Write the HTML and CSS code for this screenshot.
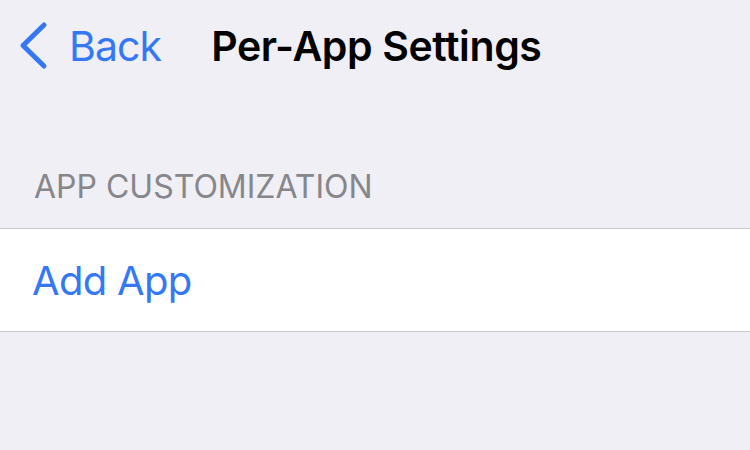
FILE: index.html
```html
<!DOCTYPE html>
<html lang="en">
<head>
  <meta charset="UTF-8" />
  <title>Per-App Settings</title>
  <link rel="stylesheet" href="styles.css">
</head>
<body>
  <header class="navbar">
    <a class="back" href="#">
      <svg class="chevron" width="30" height="50" viewBox="0 0 30 50">
        <path d="M26 4 L5 24.5 L26 45" fill="none" stroke="currentColor" stroke-width="5" stroke-linecap="round" stroke-linejoin="round"/>
      </svg>
      <span>Back</span>
    </a>
    <h1 class="title">Per-App Settings</h1>
  </header>

  <section class="group">
    <h2 class="group-header">APP CUSTOMIZATION</h2>
    <ul class="list">
      <li class="row"><a href="#" class="action">Add App</a></li>
    </ul>
  </section>
</body>
</html>
```

FILE: styles.css
```css
body {
  margin: 0;
  padding: 0;
  background: #f0eff5;
  font-family: Inter, 'Noto Sans', sans-serif;
  height: 450px;
  overflow: hidden;
}

.navbar {
  display: flex;
  align-items: center;
  height: 92px;
  padding-left: 18px;
}

.back {
  display: flex;
  align-items: center;
  gap: 21px;
  color: #3478f6;
  text-decoration: none;
  font-size: 41px;
  letter-spacing: -0.9px;
  margin-right: 50px;
}

.chevron {
  display: block;
}

.title {
  margin: 0;
  font-size: 41px;
  font-weight: 600;
  letter-spacing: -0.4px;
  color: #000;
}

.group {
  margin-top: 70px;
}

.group-header {
  margin: 0 0 16px;
  padding-left: 34px;
  font-size: 32px;
  font-weight: 400;
  color: #86868b;
  line-height: 50px;
}

.list {
  list-style: none;
  margin: 0;
  padding: 0;
  background: #fff;
  border-top: 1px solid #c8c7cc;
  border-bottom: 1px solid #c8c7cc;
}

.row {
  height: 102px;
  display: flex;
  align-items: center;
  padding-left: 32px;
}

.action {
  color: #3478f6;
  text-decoration: none;
  font-size: 40px;
  letter-spacing: -0.7px;
}
```
